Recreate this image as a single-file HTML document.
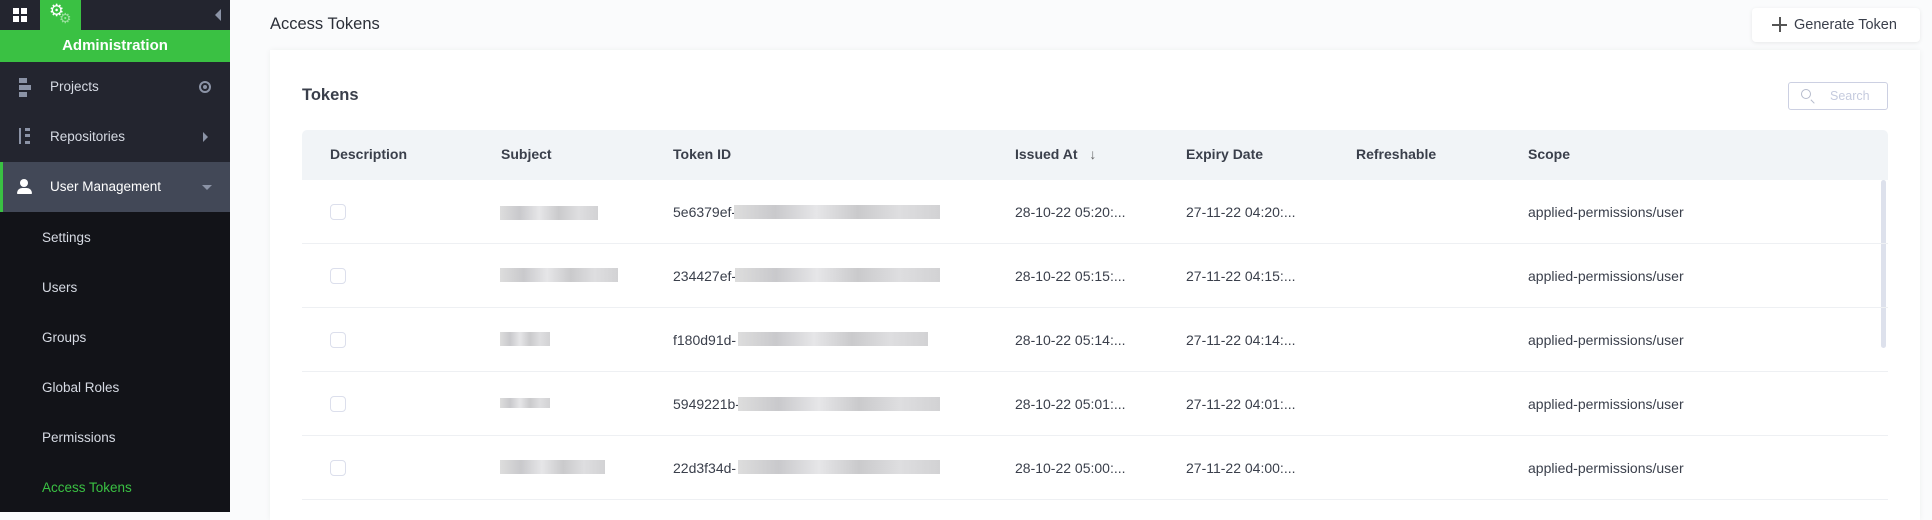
<!DOCTYPE html>
<html><head><meta charset="utf-8"><style>
*{box-sizing:border-box;margin:0;padding:0}
body{width:1932px;height:512px;overflow:hidden;background:#fafbfc;font-family:"Liberation Sans",sans-serif;position:relative}
.sb{position:absolute;left:0;top:0;width:230px;height:512px;background:#121318}
.top{position:absolute;left:0;top:0;width:230px;height:30px;background:#23252f}
.admin{position:absolute;left:0;top:30px;width:230px;height:32px;background:#3ac143;color:#fff;font-weight:bold;font-size:15px;text-align:center;line-height:32px}
.mi{position:absolute;left:0;width:230px;height:50px;background:#23252f;color:#d6dae3;font-size:13.5px;line-height:50px;padding-left:50px}
.si{position:absolute;left:42px;color:#d6dae3;font-size:13.5px}
.c{position:absolute;color:#3a3f4b;font-size:14px}
.h{position:absolute;top:146px;color:#3a3f4b;font-size:14px;font-weight:bold}
.cb{position:absolute;left:330px;width:16px;height:16px;border:1px solid #dcdfec;border-radius:4px;background:#fff}
.bar{position:absolute;height:14px;background:linear-gradient(90deg,#ddd,#c9c9cc 20%,#e6e6e8 40%,#cacacc 60%,#dedee0 80%,#d2d2d4)}
.rl{position:absolute;left:302px;width:1586px;height:1px;background:#eef0f3}
</style></head><body>
<div class="sb"></div>
<div class="top"></div>
<div style="position:absolute;left:40px;top:0;width:41px;height:30px;background:#3ac143"></div>
<div style="position:absolute;left:13px;top:8px;width:6px;height:6px;background:#fff"></div>
<div style="position:absolute;left:21px;top:8px;width:6px;height:6px;background:#fff"></div>
<div style="position:absolute;left:13px;top:16px;width:6px;height:6px;background:#fff"></div>
<div style="position:absolute;left:21px;top:16px;width:6px;height:6px;background:#fff"></div>
<div style="position:absolute;left:49px;top:1px;color:#fff;font-size:17px;line-height:20px">⚙</div>
<div style="position:absolute;left:59px;top:9px;color:#9be09f;font-size:14px;line-height:18px">⚙</div>
<div style="position:absolute;left:215px;top:9px;width:0;height:0;border-top:6px solid transparent;border-bottom:6px solid transparent;border-right:6px solid #8b93a6"></div>
<div class="admin">Administration</div>
<div class="mi" style="top:62px">Projects</div>
<div style="position:absolute;left:19px;top:78px;width:8px;height:5px;background:#8b93a6"></div>
<div style="position:absolute;left:19px;top:85px;width:12px;height:5px;background:#8b93a6"></div>
<div style="position:absolute;left:19px;top:92px;width:8px;height:5px;background:#8b93a6"></div>
<div style="position:absolute;left:199px;top:81px;width:12px;height:12px;border:2px solid #8b93a6;border-radius:50%"><div style="margin:2px;width:4px;height:4px;background:#8b93a6;border-radius:50%"></div></div>
<div class="mi" style="top:112px">Repositories</div>
<div style="position:absolute;left:19px;top:128px;width:2px;height:16px;background:#8b93a6"></div>
<div style="position:absolute;left:25px;top:128px;width:5px;height:3px;background:#8b93a6"></div>
<div style="position:absolute;left:25px;top:134px;width:5px;height:3px;background:#8b93a6"></div>
<div style="position:absolute;left:25px;top:141px;width:5px;height:3px;background:#8b93a6"></div>
<div style="position:absolute;left:203px;top:132px;border-top:5px solid transparent;border-bottom:5px solid transparent;border-left:5px solid #8b93a6"></div>
<div class="mi" style="top:162px;background:#424857;color:#fff">User Management</div>
<div style="position:absolute;left:0;top:162px;width:3px;height:50px;background:#3ac143"></div>
<div style="position:absolute;left:20px;top:179px;width:8px;height:8px;background:#fff;border-radius:50%"></div>
<div style="position:absolute;left:17px;top:188px;width:15px;height:6px;background:#fff;border-radius:6px 6px 1px 1px"></div>
<div style="position:absolute;left:202px;top:185px;border-left:5px solid transparent;border-right:5px solid transparent;border-top:5px solid #8b93a6"></div>
<div class="si" style="top:230px">Settings</div>
<div class="si" style="top:280px">Users</div>
<div class="si" style="top:330px">Groups</div>
<div class="si" style="top:380px">Global Roles</div>
<div class="si" style="top:430px">Permissions</div>
<div class="si" style="top:480px;color:#3ac143">Access Tokens</div>

<div style="position:absolute;left:270px;top:15px;font-size:16.5px;color:#2b2f38">Access Tokens</div>
<div style="position:absolute;left:1752px;top:8px;width:168px;height:34px;background:#fff;border-radius:4px;box-shadow:0 1px 4px rgba(0,0,0,.08);font-size:14.5px;color:#3a3f4b;line-height:34px;padding-left:42px">Generate Token</div>
<div style="position:absolute;left:1772px;top:24px;width:15px;height:1.5px;background:#555"></div>
<div style="position:absolute;left:1779px;top:17px;width:1.5px;height:15px;background:#555"></div>

<div style="position:absolute;left:270px;top:50px;width:1650px;height:470px;background:#fff;box-shadow:0 0 6px rgba(0,0,0,.05)"></div>
<div style="position:absolute;left:302px;top:86px;font-size:16.5px;font-weight:bold;color:#3a3f4b">Tokens</div>
<div style="position:absolute;left:1788px;top:82px;width:100px;height:28px;border:1px solid #ccd0e2;border-radius:3px;color:#c5cbde;font-size:12.5px;line-height:26px;padding-left:41px">Search</div>
<div style="position:absolute;left:1801px;top:89px;width:10px;height:10px;border:1.3px solid #b5bbcc;border-radius:50%"></div>
<div style="position:absolute;left:1810px;top:101px;width:5px;height:1.3px;background:#b5bbcc;transform:rotate(45deg)"></div>
<div style="position:absolute;left:302px;top:130px;width:1586px;height:50px;background:#f1f4f7;border-radius:5px 5px 0 0"></div>
<div class="h" style="left:330px">Description</div>
<div class="h" style="left:501px">Subject</div>
<div class="h" style="left:673px">Token ID</div>
<div class="h" style="left:1015px">Issued At <span style="font-weight:normal;color:#666;margin-left:8px">↓</span></div>
<div class="h" style="left:1186px">Expiry Date</div>
<div class="h" style="left:1356px">Refreshable</div>
<div class="h" style="left:1528px">Scope</div>
<div style="position:absolute;left:1881px;top:180px;width:5px;height:168px;background:#dde1ec;border-radius:3px"></div>

<div class="rl" style="top:243px"></div><div class="rl" style="top:307px"></div><div class="rl" style="top:371px"></div><div class="rl" style="top:435px"></div><div class="rl" style="top:499px"></div>

<div class="cb" style="top:204px"></div><div class="bar" style="left:500px;top:206px;width:98px"></div>
<div class="c" style="left:673px;top:204px">5e6379ef-</div><div class="bar" style="left:734px;top:205px;width:206px"></div>
<div class="c" style="left:1015px;top:204px">28-10-22 05:20:...</div><div class="c" style="left:1186px;top:204px">27-11-22 04:20:...</div><div class="c" style="left:1528px;top:204px">applied-permissions/user</div>

<div class="cb" style="top:268px"></div><div class="bar" style="left:500px;top:268px;width:118px"></div>
<div class="c" style="left:673px;top:268px">234427ef-</div><div class="bar" style="left:735px;top:268px;width:205px"></div>
<div class="c" style="left:1015px;top:268px">28-10-22 05:15:...</div><div class="c" style="left:1186px;top:268px">27-11-22 04:15:...</div><div class="c" style="left:1528px;top:268px">applied-permissions/user</div>

<div class="cb" style="top:332px"></div><div class="bar" style="left:500px;top:332px;width:50px"></div>
<div class="c" style="left:673px;top:332px">f180d91d-</div><div class="bar" style="left:738px;top:332px;width:190px"></div>
<div class="c" style="left:1015px;top:332px">28-10-22 05:14:...</div><div class="c" style="left:1186px;top:332px">27-11-22 04:14:...</div><div class="c" style="left:1528px;top:332px">applied-permissions/user</div>

<div class="cb" style="top:396px"></div><div class="bar" style="left:500px;top:398px;width:50px;height:10px"></div>
<div class="c" style="left:673px;top:396px">5949221b-</div><div class="bar" style="left:738px;top:397px;width:202px"></div>
<div class="c" style="left:1015px;top:396px">28-10-22 05:01:...</div><div class="c" style="left:1186px;top:396px">27-11-22 04:01:...</div><div class="c" style="left:1528px;top:396px">applied-permissions/user</div>

<div class="cb" style="top:460px"></div><div class="bar" style="left:500px;top:460px;width:105px"></div>
<div class="c" style="left:673px;top:460px">22d3f34d-</div><div class="bar" style="left:738px;top:460px;width:202px"></div>
<div class="c" style="left:1015px;top:460px">28-10-22 05:00:...</div><div class="c" style="left:1186px;top:460px">27-11-22 04:00:...</div><div class="c" style="left:1528px;top:460px">applied-permissions/user</div>
</body></html>
